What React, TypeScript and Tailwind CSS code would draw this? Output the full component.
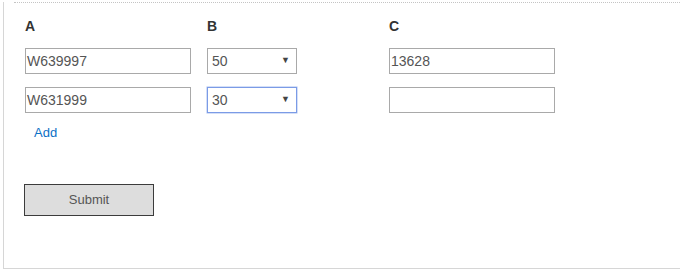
import React from "react";

function Select({ value, focused }: { value: string; focused?: boolean }) {
  return (
    <div
      className={
        "flex h-[26px] w-[90px] items-center justify-between bg-white pl-[4px] pr-[6px] text-[14px] text-[#555] " +
        (focused ? "border border-[#7b9be6] shadow-[0_0_0_0.5px_#a9bff0]" : "border border-[#a9a9a9]")
      }
    >
      <span>{value}</span>
      <span className="text-[9px] text-[#444]">▼</span>
    </div>
  );
}

function Input({ value }: { value: string }) {
  return (
    <div className="flex h-[26px] w-[166px] items-center border border-[#a9a9a9] bg-white pl-[1px] text-[14px] text-[#555]">
      {value}
    </div>
  );
}

export default function App() {
  return (
    <div className="h-[269px] w-[680px] bg-white font-['Liberation_Sans',Arial,sans-serif]">
      <div className="ml-[3px] h-[267px] border-b border-l border-[#d6d6d6] pl-[10px]">
        <div className="mt-[2px] border-t border-dotted border-[#c4c4c4] pl-[11px] pt-[15px]">
          <div className="grid grid-cols-[182px_182px_166px] gap-y-[13px]">
            <div className="mb-[1px] h-[16px] text-[14px] font-bold leading-[16px] text-[#333]">A</div>
            <div className="mb-[1px] h-[16px] text-[14px] font-bold leading-[16px] text-[#333]">B</div>
            <div className="mb-[1px] h-[16px] text-[14px] font-bold leading-[16px] text-[#333]">C</div>
            <Input value="W639997" />
            <Select value="50" />
            <Input value="13628" />
            <Input value="W631999" />
            <Select value="30" focused />
            <Input value="" />
          </div>
          <div className="mt-[12px] pl-[9px] text-[13px] leading-[16px] text-[#0b70c6]">Add</div>
          <button className="mt-[43px] h-[32px] w-[130px] -ml-[1px] border border-[#3c3c3c] bg-[#dddddd] text-[13px] text-[#555]">
            Submit
          </button>
        </div>
      </div>
    </div>
  );
}
